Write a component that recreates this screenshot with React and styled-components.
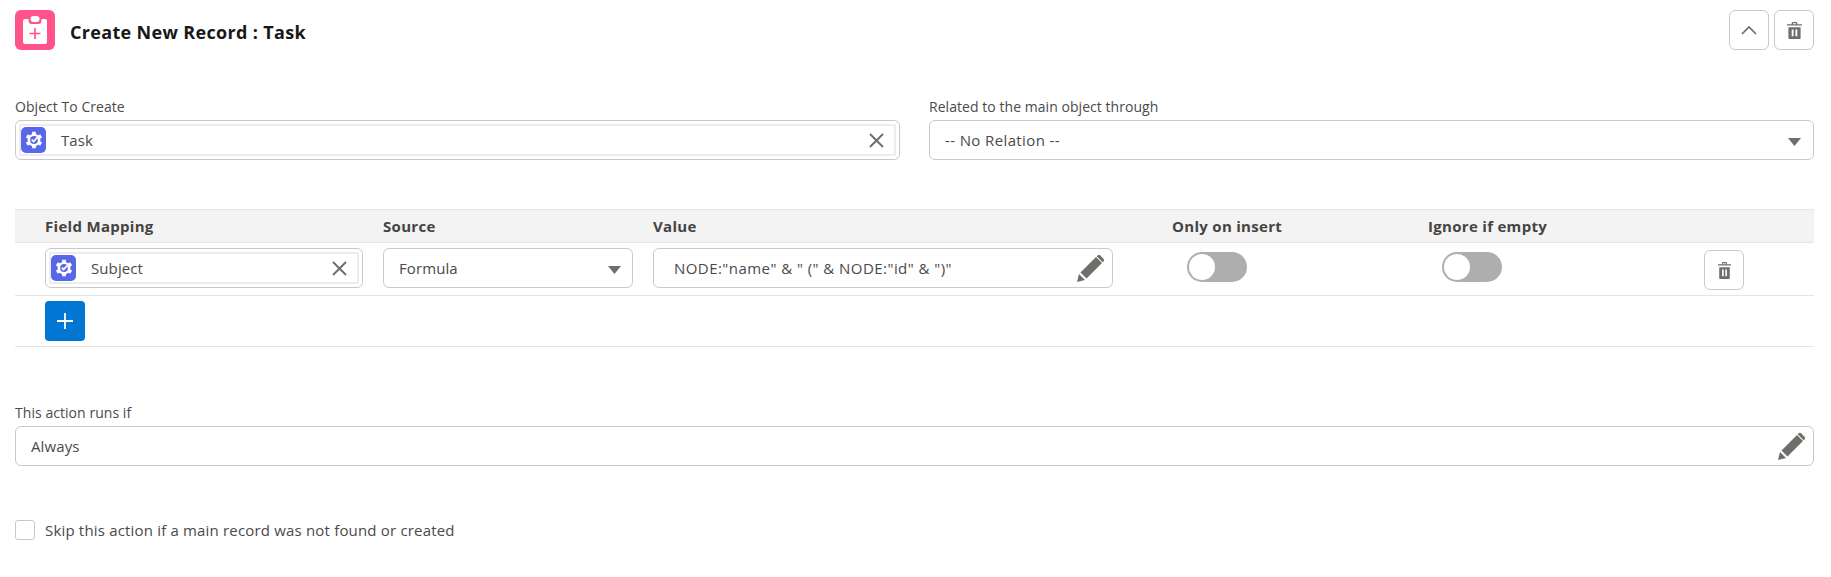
import styled, { createGlobalStyle } from "styled-components";

const GlobalStyle = createGlobalStyle`
  html, body {
    margin: 0;
    padding: 0;
    background: #ffffff;
  }

  body {
    font-family: "Open Sans", "Liberation Sans", sans-serif;
    font-size: 14px;
    color: #4a4a4a;
  }
`;

const tableColumns = "338px 270px 519px 256px 276px 1fr";

const Page = styled.div`
  width: 1831px;
  height: 577px;
  box-sizing: border-box;
  padding: 10px 17px 0 15px;
  overflow: hidden;
`;

const Header = styled.header`
  display: flex;
  align-items: center;
  height: 40px;
`;

const HeaderIcon = styled.div`
  width: 40px;
  height: 40px;
  border-radius: 6px;
  background: #ff538a;
  display: flex;
  align-items: center;
  justify-content: center;
`;

const Title = styled.h1`
  margin: 0 0 0 15px;
  padding-top: 3px;
  flex: 1;
  font-size: 18px;
  font-weight: 700;
  letter-spacing: 0.33px;
  color: #181818;
`;

const HeaderActions = styled.div`
  display: flex;
  gap: 5px;
`;

const IconButton = styled.button`
  width: 40px;
  height: 40px;
  padding: 0;
  box-sizing: border-box;
  border: 1px solid #c9c9c9;
  border-radius: 6px;
  background: #ffffff;
  display: flex;
  align-items: center;
  justify-content: center;
`;

const RowTrashButton = styled(IconButton)`
  margin-top: 4px;
`;

const FieldRow = styled.div`
  display: grid;
  grid-template-columns: 885px 885px;
  gap: 29px;
  margin-top: 47px;
`;

const FieldLabel = styled.label`
  display: block;
  height: 23px;
  line-height: 20px;
  font-size: 14px;
  letter-spacing: 0.05px;
`;

const Input = styled.div`
  box-sizing: border-box;
  height: 40px;
  width: ${(p) => (p.$width ? `${p.$width}px` : "100%")};
  border: 1px solid #c9c9c9;
  border-radius: 6px;
  background: #ffffff;
  display: flex;
  align-items: center;
  padding: 0 ${(p) => p.$right ?? 15}px 0 ${(p) => p.$left ?? 15}px;
  font-size: 15px;
  white-space: nowrap;
`;

const InputText = styled.span`
  flex: 1;
  letter-spacing: ${(p) => p.$spacing ?? 0.1}px;
`;

const LookupBox = styled.div`
  box-sizing: border-box;
  height: 40px;
  width: ${(p) => (p.$width ? `${p.$width}px` : "100%")};
  border: 1px solid #c9c9c9;
  border-radius: 6px;
  padding: 3px;
  background: #ffffff;
`;

const LookupInner = styled.div`
  box-sizing: border-box;
  height: 32px;
  border: 2px solid #ededed;
  display: flex;
  align-items: center;
  padding: 0 10px 0 0;
  font-size: 15px;
`;

const ObjectBadge = styled.span`
  width: 25px;
  height: 26px;
  border-radius: 5px;
  background: #5867e8;
  display: flex;
  align-items: center;
  justify-content: center;
  flex-shrink: 0;
  margin-right: 15px;
`;

const Table = styled.section`
  margin-top: 49px;
`;

const TableHead = styled.div`
  display: grid;
  grid-template-columns: ${tableColumns};
  box-sizing: border-box;
  height: 34px;
  padding-left: 30px;
  align-items: center;
  background: #f3f3f3;
  border-top: 1px solid #e5e5e5;
  border-bottom: 1px solid #e5e5e5;
  font-size: 15px;
  font-weight: 700;
  letter-spacing: 0.3px;
  color: #444444;
`;

const TableRow = styled.div`
  display: grid;
  grid-template-columns: ${tableColumns};
  box-sizing: border-box;
  height: 53px;
  padding: 0 0 2px 30px;
  align-items: center;
  border-bottom: 1px solid #e5e5e5;
`;

const AddRow = styled.div`
  box-sizing: border-box;
  height: 51px;
  padding: 5px 0 0 30px;
  border-bottom: 1px solid #e5e5e5;
`;

const AddButton = styled.button`
  width: 40px;
  height: 40px;
  padding: 0;
  border: none;
  border-radius: 4px;
  background: #0176d3;
  display: flex;
  align-items: center;
  justify-content: center;
`;

const ToggleCell = styled.div`
  padding-left: ${(p) => p.$left}px;
  margin-bottom: 2px;
`;

const Toggle = styled.div`
  box-sizing: border-box;
  width: 60px;
  height: 30px;
  border-radius: 15px;
  background: #aeaeae;
  padding: 2px;
`;

const ToggleKnob = styled.div`
  width: 26px;
  height: 26px;
  border-radius: 50%;
  background: #ffffff;
`;

const ConditionBlock = styled.div`
  margin-top: 56px;
`;

const CheckRow = styled.div`
  display: flex;
  align-items: center;
  gap: 10px;
  margin-top: 54px;
  font-size: 15px;
  letter-spacing: 0.18px;
`;

const CheckBox = styled.span`
  box-sizing: border-box;
  width: 20px;
  height: 20px;
  border: 1px solid #c9c9c9;
  border-radius: 3px;
  background: #ffffff;
`;

const CaretWrap = styled.span`
  display: flex;
  margin-top: 3px;
`;

const ClipboardIcon = () => (
  <svg width="24" height="28" viewBox="0 0 24 28">
    <path
      fill="#fff"
      d="M2 3h3.5v1.5A3.5 3.5 0 0 0 9 8h6a3.5 3.5 0 0 0 3.5-3.5V3H22a2 2 0 0 1 2 2v21a2 2 0 0 1-2 2H2a2 2 0 0 1-2-2V5a2 2 0 0 1 2-2z"
    />
    <rect x="7.5" y="0" width="9" height="6" rx="3" fill="#fff" />
    <path d="M12 12v11M6.5 17.5h11" stroke="#ff538a" strokeWidth="1.6" />
  </svg>
);

const GearCheckIcon = () => (
  <svg width="18" height="18" viewBox="0 0 24 24">
    <circle cx="12" cy="12" r="8.500" fill="#fff" />
    {[0, 60, 120, 180, 240, 300].map((angle) => (
      <rect key={angle} x="9.500" y="1" width="5" height="5" fill="#fff" transform={`rotate(${angle} 12 12)`} />
    ))}
    <circle cx="12" cy="12" r="5.200" fill="#5867e8" />
    <path d="M9 11.500l2.400 2.600 5.600-6" stroke="#fff" strokeWidth="2.200" fill="none" />
  </svg>
);

const TrashIcon = ({ width = 15 }) => (
  <svg width={width} height="17" viewBox="0 0 16 18" preserveAspectRatio="none">
    <path
      fill="#706e6b"
      fillRule="evenodd"
      d="M6 0h4a1 1 0 0 1 1 1v1.500h5v1.300H0V2.500h5V1a1 1 0 0 1 1-1zm.3 1.200v1.300h3.400V1.200z"
    />
    <path
      fill="#706e6b"
      fillRule="evenodd"
      d="M1.500 5.500h13V17a1 1 0 0 1-1 1h-11a1 1 0 0 1-1-1zM5 8v7h2V8zm4 0v7h2V8z"
    />
  </svg>
);

const ChevronUp = () => (
  <svg width="16" height="10" viewBox="0 0 16 10">
    <path d="M1 9l7-7 7 7" fill="none" stroke="#706e6b" strokeWidth="1.700" />
  </svg>
);

const CloseIcon = () => (
  <svg width="15" height="15" viewBox="0 0 15 15">
    <path d="M1 1l13 13M14 1L1 14" stroke="#706e6b" strokeWidth="1.900" />
  </svg>
);

const Caret = () => (
  <CaretWrap>
    <svg width="13" height="8" viewBox="0 0 13 8">
      <path d="M0 0h13L6.500 8z" fill="#706e6b" />
    </svg>
  </CaretWrap>
);

const PencilIcon = () => (
  <svg width="28" height="28" viewBox="0 0 28 28">
    <path fill="#706e6b" d="M0 28l2-8 6 6z" />
    <path fill="#706e6b" d="M3.500 18.500L19 3l6 6L9.500 24.500z" />
    <path fill="#706e6b" d="M20.500 1.500a2 2 0 0 1 2.800 0l3.200 3.200a2 2 0 0 1 0 2.800l-.8.800-6-6z" />
  </svg>
);

const PlusIcon = () => (
  <svg width="16" height="16" viewBox="0 0 16 16">
    <path d="M8 0v16M0 8h16" stroke="#fff" strokeWidth="1.800" />
  </svg>
);

const Lookup = ({ value, width }) => (
  <LookupBox $width={width}>
    <LookupInner>
      <ObjectBadge>
        <GearCheckIcon />
      </ObjectBadge>
      <InputText>{value}</InputText>
      <CloseIcon />
    </LookupInner>
  </LookupBox>
);

const App = () => {
  return (
    <Page>
      <GlobalStyle />
      <Header>
        <HeaderIcon>
          <ClipboardIcon />
        </HeaderIcon>
        <Title>Create New Record : Task</Title>
        <HeaderActions>
          <IconButton>
            <ChevronUp />
          </IconButton>
          <IconButton>
            <TrashIcon />
          </IconButton>
        </HeaderActions>
      </Header>

      <FieldRow>
        <div>
          <FieldLabel>Object To Create</FieldLabel>
          <Lookup value="Task" />
        </div>
        <div>
          <FieldLabel>Related to the main object through</FieldLabel>
          <Input $right={12}>
            <InputText $spacing={0.38}>-- No Relation --</InputText>
            <Caret />
          </Input>
        </div>
      </FieldRow>

      <Table>
        <TableHead>
          <div>Field Mapping</div>
          <div>Source</div>
          <div>Value</div>
          <div>Only on insert</div>
          <div>Ignore if empty</div>
          <div />
        </TableHead>
        <TableRow>
          <Lookup value="Subject" width={318} />
          <Input $width={250} $right={11}>
            <InputText>Formula</InputText>
            <Caret />
          </Input>
          <Input $width={460} $left={20} $right={7}>
            <InputText $spacing={0.45}>NODE:"name" &amp; " (" &amp; NODE:"id" &amp; ")"</InputText>
            <PencilIcon />
          </Input>
          <ToggleCell $left={15}>
            <Toggle>
              <ToggleKnob />
            </Toggle>
          </ToggleCell>
          <ToggleCell $left={14}>
            <Toggle>
              <ToggleKnob />
            </Toggle>
          </ToggleCell>
          <RowTrashButton>
            <TrashIcon width={13} />
          </RowTrashButton>
        </TableRow>
        <AddRow>
          <AddButton>
            <PlusIcon />
          </AddButton>
        </AddRow>
      </Table>

      <ConditionBlock>
        <FieldLabel>This action runs if</FieldLabel>
        <Input $right={7}>
          <InputText>Always</InputText>
          <PencilIcon />
        </Input>
      </ConditionBlock>

      <CheckRow>
        <CheckBox />
        Skip this action if a main record was not found or created
      </CheckRow>
    </Page>
  );
};

export default App;
